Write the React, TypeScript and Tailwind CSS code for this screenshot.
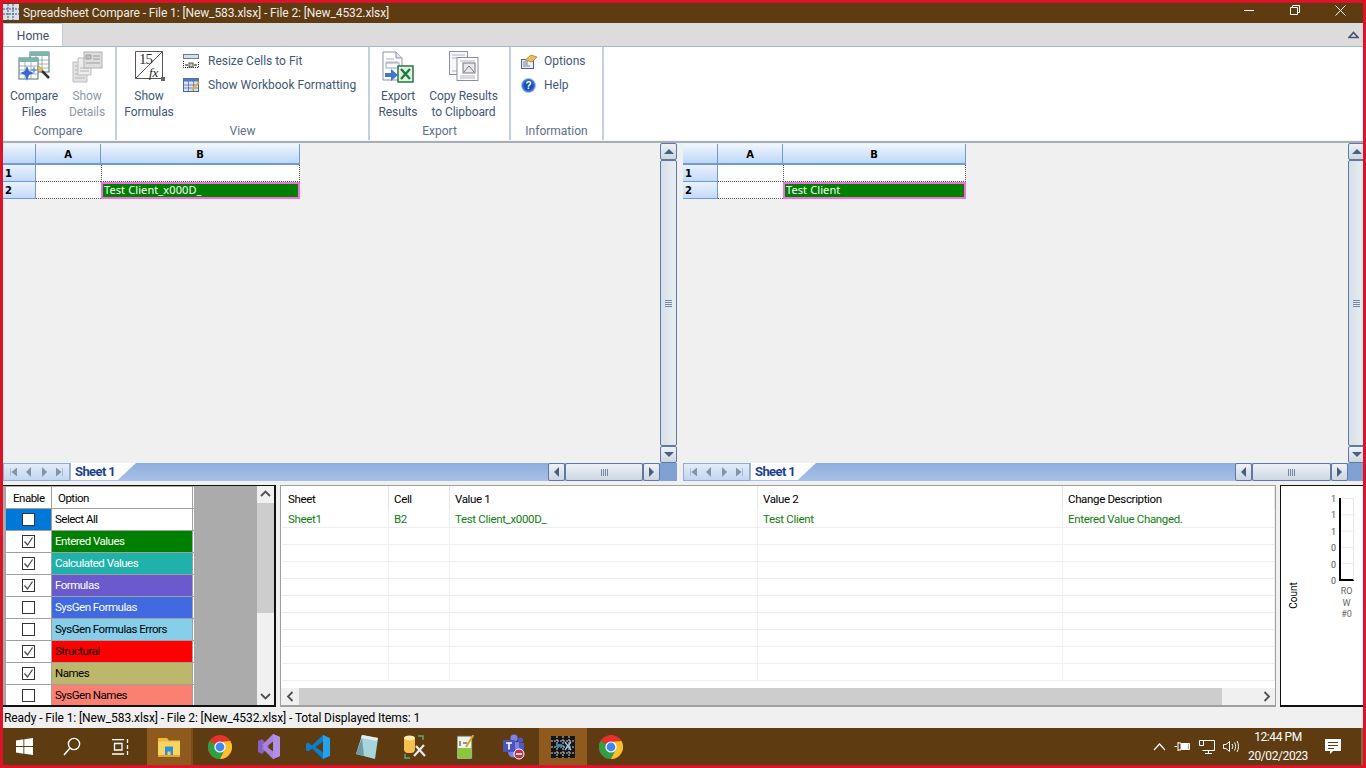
import React from "react";

const font = "font-['Roboto','Liberation_Sans',sans-serif]";

function Chrome() {
  return (
    <svg width="24" height="24" viewBox="0 0 24 24">
      <circle cx="12" cy="12" r="12" fill="#e5322d" />
      <path d="M12 12 L1.6 18 A12 12 0 0 1 1.6 6 L6 6 Z" fill="#e5322d" />
      <path d="M12 12 L1.6 6 A12 12 0 0 0 12 24 L18 13 Z" fill="#2f9e44" />
      <path d="M12 7 L22.4 6 A12 12 0 0 1 12 24 L17 14 Z" fill="#fbc02d" />
      <circle cx="12" cy="12" r="5.6" fill="#fff" />
      <circle cx="12" cy="12" r="4.4" fill="#3f86ee" />
    </svg>
  );
}

function TaskIcon({ kind }: { kind: string }) {
  if (kind === "win")
    return (
      <svg width="17" height="17" viewBox="0 0 17 17" fill="#fff">
        <path d="M0 2.4 7.4 1.3V8H0ZM8.3 1.2 17 0V8H8.3ZM0 9H7.4V15.7L0 14.6ZM8.3 9H17V17L8.3 15.8Z" />
      </svg>
    );
  if (kind === "search")
    return (
      <svg width="18" height="20" viewBox="0 0 18 20" fill="none" stroke="#fff" strokeWidth="1.4">
        <circle cx="11" cy="7" r="5.6" />
        <path d="M7 11 1 18" />
      </svg>
    );
  if (kind === "tasks")
    return (
      <svg width="17" height="16" viewBox="0 0 17 16" fill="none" stroke="#fff" strokeWidth="1.3">
        <path d="M0 .7H12M2.5 4.5H10V11H2.5ZM0 15H12M15.5 0V4M15.5 6V10M15.5 12V16" />
      </svg>
    );
  if (kind === "explorer")
    return (
      <svg width="22" height="20" viewBox="0 0 22 20">
        <path d="M0 1H9L11 3.5H22V20H0Z" fill="#f0b93a" />
        <rect x="0" y="4.5" width="22" height="15.5" fill="#f6d365" />
        <path d="M7 9.5H15V20H12.5V14.5H9.5V20H7Z" fill="#2e8fd8" />
        <rect x="0" y="18" width="22" height="2" fill="#e3a82b" />
      </svg>
    );
  if (kind === "chrome") return <Chrome />;
  if (kind === "vs")
    return (
      <svg width="22" height="25" viewBox="0 0 22 25">
        <path d="M0 7 4 5 11 12.5 4 20 0 18Z" fill="#8661c5" />
        <path d="M15 0 22 3V22L15 25 4 14 7 11 15 17.5V7.5L7 14 4 11Z" fill="#a783de" />
        <path d="M15 0 22 3V22L15 25Z" fill="#b18fe6" />
      </svg>
    );
  if (kind === "vscode")
    return (
      <svg width="24" height="24" viewBox="0 0 24 24">
        <path d="M17 0 24 3.2V20.8L17 24 6 13.5 2 16.5 0 15V9L2 7.5 6 10.5Z" fill="#0a7fcc" />
        <path d="M17 0 24 3.2V20.8L17 24Z" fill="#26a2ec" />
        <path d="M17 6.5V17.5L9.5 12Z" fill="#5f3b11" />
      </svg>
    );
  if (kind === "note")
    return (
      <svg width="22" height="24" viewBox="0 0 22 24">
        <path d="M6 0 22 3 19 24 0 19Z" fill="#a8d4dc" />
        <path d="M6 0 22 3 21 6 5 3Z" fill="#dfeff2" />
        <path d="M6 3 0 19 8 21Z" fill="#6e9ba6" />
      </svg>
    );
  if (kind === "db")
    return (
      <svg width="24" height="24" viewBox="0 0 24 24" fill="none">
        <rect x="0" y="1" width="11" height="17" rx="4" fill="#f2c14e" />
        <ellipse cx="5.5" cy="3" rx="5.5" ry="2.5" fill="#fbe7a8" />
        <path d="M14 1H19V5M1 19V23H6" stroke="#57b26a" strokeWidth="1.4" />
        <path d="M10 21 20 10M12 11 21 21" stroke="#e8e8e8" strokeWidth="2.2" />
      </svg>
    );
  if (kind === "pad")
    return (
      <svg width="17" height="24" viewBox="0 0 17 24">
        <rect x="0" y="1" width="15" height="23" fill="#eef3e8" stroke="#55663a" />
        <rect x="1" y="13" width="13" height="10" fill="#8cc63f" />
        <path d="M3 6V11M6 8H10" stroke="#333" strokeWidth="1" />
        <path d="M16.5 0 9 12" stroke="#e0a030" strokeWidth="2" />
      </svg>
    );
  if (kind === "teams")
    return (
      <svg width="22" height="26" viewBox="0 0 22 26">
        <circle cx="11" cy="4" r="3.6" fill="#7b83eb" />
        <circle cx="17.5" cy="6" r="2.6" fill="#5059c9" />
        <path d="M14 9H21V16A4 4 0 0 1 14 18Z" fill="#5059c9" />
        <path d="M5 8H16V18A5 5 0 0 1 5 18Z" fill="#7b83eb" />
        <rect x="0" y="6" width="12" height="12" rx="1" fill="#4b53bc" />
        <path d="M3 9H9M6 9V15.5" stroke="#fff" strokeWidth="1.6" />
        <circle cx="16" cy="20" r="5" fill="#c4314b" stroke="#fff" strokeWidth="1" />
        <rect x="13" y="19.2" width="6" height="1.6" fill="#fff" />
      </svg>
    );
  if (kind === "compare")
    return (
      <svg width="24" height="22" viewBox="0 0 24 22">
        <rect width="24" height="22" fill="#151515" />
        <path d="M0 5H24M0 11H24M0 17H24M6 0V22M12 0V22M18 0V22" stroke="#cfcfcf" strokeWidth="1" strokeDasharray="2 1" />
        <rect x="5" y="8" width="6" height="3" fill="#3f7fc4" />
        <path d="M14 6 20 14M20 6 14 14" stroke="#9ac4e8" strokeWidth="1.4" />
      </svg>
    );
  return null;
}

function Ribbon32({ kind }: { kind: string }) {
  if (kind === "compare")
    return (
      <svg width="32" height="32" viewBox="0 0 32 32">
        <rect x="12" y="1" width="19" height="20" fill="#fff" stroke="#4d7272" />
        <rect x="12" y="1" width="19" height="4" fill="#7fb3ae" />
        <path d="M12 9H31M12 13H31M12 17H31M18 5V21M24 5V21" stroke="#7b9a9a" strokeWidth=".7" />
        <rect x="1" y="7" width="19" height="21" fill="#fff" stroke="#4d7272" />
        <rect x="1" y="7" width="19" height="4" fill="#7fb3ae" />
        <path d="M1 15H20M1 19H20M1 23H20M7 11V28M13 11V28" stroke="#7b9a9a" strokeWidth=".7" />
        <path d="M9 15 11 20 16 22 11 24 9 30 7 24 2 22 7 20Z" fill="#3868d8" />
        <path d="M16 15 17 18 20 19 17 20 16 23 15 20 12 19 15 18Z" fill="#6d95ee" />
        <path d="M20 16 31 27" stroke="#333" strokeWidth="2.5" />
        <path d="M20 16 24 20" stroke="#f0c040" strokeWidth="2.5" />
      </svg>
    );
  if (kind === "details")
    return (
      <svg width="32" height="32" viewBox="0 0 32 32">
        <path d="M2 11H16V31H2Z" fill="#e2e2e2" stroke="#bdbdbd" />
        <path d="M4 15H14M4 19H14M4 23H14M4 27H14" stroke="#b4b4b4" />
        <path d="M7 7H20V24H7Z" fill="#ededed" stroke="#bdbdbd" />
        <path d="M9 17H18M9 20H18" stroke="#b4b4b4" />
        <rect x="13" y="1" width="18" height="16" fill="#dedede" stroke="#b0b0b0" />
        <path d="M15 4H20V8H15ZM22 5H29M22 8H29M15 12H29" stroke="#9c9c9c" fill="#c4c4c4" />
      </svg>
    );
  if (kind === "formula")
    return (
      <svg width="32" height="32" viewBox="0 0 32 32" fontFamily="Liberation Serif, serif" className="ml-[3px]">
        <path d="M27.5 .5H.5V27.5H27.5V.5L.5 27.5" fill="#fff" stroke="#555" />
        <text x="4" y="13" fontSize="15" fill="#333" letterSpacing="-1">15</text>
        <text x="14" y="26" fontSize="13" fontStyle="italic" fill="#222">fx</text>
        <rect x="26" y="26" width="4" height="4" fill="#666" />
      </svg>
    );
  if (kind === "export")
    return (
      <svg width="32" height="32" viewBox="0 0 32 32">
        <path d="M1 1H14L20 7V29H1Z" fill="#fff" stroke="#8a94a8" />
        <path d="M14 1V7H20" fill="#dde3ee" stroke="#8a94a8" />
        <path d="M4 8H12M4 11H16M4 14H16" stroke="#aab2c2" />
        <rect x="4" y="12" width="13" height="5" fill="#fff" stroke="#9aa4b6" />
        <path d="M3 22H9V18L16 24 9 30V26H3Z" fill="#3f77d2" />
        <rect x="16" y="15" width="15" height="16" fill="#e8f2e0" stroke="#17703a" strokeWidth="1.4" />
        <path d="M19 18 28 28M28 18 19 28" stroke="#17803e" strokeWidth="2.4" />
      </svg>
    );
  return (
    <svg width="30" height="30" viewBox="0 0 30 30">
      <rect x=".5" y=".5" width="18" height="23" fill="#f7f7fb" stroke="#8d8fa8" />
      <path d="M3 4H16M3 7H16M3 20H16" stroke="#b0b2c4" />
      <rect x="8" y="6.5" width="21" height="23" fill="#fff" stroke="#8d8fa8" />
      <path d="M11 10H26M11 25H26M11 27H26" stroke="#b0b2c4" />
      <rect x="14" y="12" width="12" height="10" fill="#e8e8ec" stroke="#777" />
      <path d="M15 21 20 15 25 21" stroke="#777" fill="none" />
    </svg>
  );
}

function Small({ kind }: { kind: string }) {
  if (kind === "resize")
    return (
      <svg width="16" height="14" viewBox="0 0 16 14">
        <rect x=".5" y=".5" width="15" height="4" fill="#cfe0ee" stroke="#6a7d90" />
        <path d="M.5 7V13.5H15.5V7" stroke="#222" strokeDasharray="1 1" fill="none" />
        <rect x="6" y="9" width="4" height="4" fill="#ccc" stroke="#555" />
        <path d="M2 11H5M11 11H14" stroke="#111" />
      </svg>
    );
  if (kind === "format")
    return (
      <svg width="17" height="16" viewBox="0 0 17 16">
        <rect x=".5" y="1.5" width="15" height="13" fill="#dbe4f7" stroke="#4a66a0" />
        <rect x=".5" y="1.5" width="15" height="3" fill="#5277c4" />
        <path d="M.5 8H15.5M.5 11H15.5M5.5 4V14.5M10.5 4V14.5" stroke="#4a66a0" strokeWidth=".7" />
        <path d="M9 13 16 5" stroke="#e2b23a" strokeWidth="2" />
      </svg>
    );
  if (kind === "options")
    return (
      <svg width="17" height="15" viewBox="0 0 17 15">
        <rect x=".5" y="5.5" width="12" height="9" fill="#eef2f8" stroke="#51617c" />
        <path d="M2 8H7M2 10H7M2 12H9" stroke="#6a7d9a" />
        <path d="M4 6 10 1 16 3 11 8Z" fill="#e8bf55" stroke="#9b7a25" strokeWidth=".7" />
      </svg>
    );
  return (
    <svg width="15" height="15" viewBox="0 0 15 15">
      <circle cx="7.5" cy="7.5" r="7" fill="#2f6fd6" stroke="#a9c6f0" />
      <circle cx="7.5" cy="7.5" r="4.8" fill="#1b4fae" />
      <text x="7.5" y="11" fontSize="10" fontWeight="700" textAnchor="middle" fill="#fff" fontFamily="Liberation Sans, sans-serif">?</text>
    </svg>
  );
}

function Arrow({ dir, color = "#4a5f7d" }: { dir: "u" | "d" | "l" | "r"; color?: string }) {
  const points = { u: "0,6 5,1 10,6", d: "0,1 5,6 10,1", l: "6,0 1,5 6,10", r: "1,0 6,5 1,10" }[dir];
  const vertical = dir === "u" || dir === "d";
  return (
    <svg width={vertical ? 10 : 7} height={vertical ? 7 : 10}>
      <polygon points={points} fill={color} />
    </svg>
  );
}

function Chevron({ dir }: { dir: "u" | "d" | "l" | "r" }) {
  const d = { u: "1,7 5.5,2.5 10,7", d: "1,3 5.5,7.5 10,3", l: "7.5,1 3,5.5 7.5,10", r: "3.5,1 8,5.5 3.5,10" }[dir];
  return (
    <svg width="11" height="11" fill="none" stroke="#505050" strokeWidth="1.8">
      <polyline points={d} />
    </svg>
  );
}

function BigButton({ kind, lines, width, disabled }: { kind: string; lines: string[]; width: string; disabled?: boolean }) {
  return (
    <div className={`flex flex-col items-center ${width}`}>
      <div className="flex h-[41px] items-start justify-center pt-[4px]">
        <Ribbon32 kind={kind} />
      </div>
      <div className={`text-center text-[12px] leading-[16px] tracking-[-0.09px] whitespace-nowrap ${disabled ? "text-[#8f99a6]" : "text-[#3f5876]"}`}>
        {lines.map((l) => (
          <div key={l}>{l}</div>
        ))}
      </div>
    </div>
  );
}

function SmallButton({ kind, label }: { kind: string; label: string }) {
  return (
    <div className="flex h-[24px] items-center">
      <div className="flex w-[25px] items-center">
        <Small kind={kind} />
      </div>
      <span className="text-[12px] whitespace-nowrap text-[#3f5876]">{label}</span>
    </div>
  );
}

function RibbonGroup({ width, label, children, labelPad = "" }: { width: string; label: string; children: React.ReactNode; labelPad?: string }) {
  return (
    <div className={`flex h-full flex-col border-r-2 border-r-[#c3d0e0] ${width}`}>
      <div className="flex h-[75px]">{children}</div>
      <div className={`flex h-[17px] items-center justify-center text-[12px] text-[#5c708a] ${labelPad}`}>{label}</div>
    </div>
  );
}

function SheetGrid({ head, colA, colB, value }: { head: string; colA: string; colB: string; value: string }) {
  const headCell = "flex items-center justify-center border-r border-b-2 border-[#6f9bd4] bg-gradient-to-b from-[#f0f6fe] to-[#bfd7f8] pt-[1px] font-['DejaVu_Sans',sans-serif] text-[10px] font-bold text-black";
  const rowHead = "flex items-center border-r border-b border-[#6f9bd4] bg-gradient-to-b from-[#eaf2fe] to-[#c4dafa] pl-[2px] font-['DejaVu_Sans',sans-serif] text-[10px] font-bold text-black";
  return (
    <div className="min-w-0">
      <div className="flex h-[21px]">
        <div className={`${head} ${headCell}`} />
        <div className={`${colA} ${headCell}`}>A</div>
        <div className={`${colB} ${headCell}`}>B</div>
      </div>
      <div className="flex h-[17px]">
        <div className={`${head} ${rowHead}`}>1</div>
        <div className={`${colA} border-b border-dotted border-b-[#555] bg-white`} />
        <div className={`${colB} border-r border-b border-l border-dotted border-[#555] bg-white`} />
      </div>
      <div className="flex h-[17px]">
        <div className={`${head} ${rowHead}`}>2</div>
        <div className={`${colA} border-b border-dotted border-b-[#555] bg-white`} />
        <div className={`${colB} flex items-center border-2 border-[#f56ee0] bg-[#008000] pb-[2px] pl-[1px] font-['Noto_Sans',sans-serif] text-[11px] leading-none tracking-[0.1px] whitespace-nowrap text-white`}>{value}</div>
      </div>
    </div>
  );
}

function Grip({ vertical }: { vertical?: boolean }) {
  return vertical ? (
    <div className="flex flex-col gap-[1px]">
      {[0, 1, 2, 3].map((i) => (
        <div key={i} className="h-[1px] w-[7px] bg-[#77879e]" />
      ))}
    </div>
  ) : (
    <div className="flex gap-[1px]">
      {[0, 1, 2, 3].map((i) => (
        <div key={i} className="h-[7px] w-[1px] bg-[#77879e]" />
      ))}
    </div>
  );
}

function SheetPane({ width, head, colA, colB, value, scrollW }: { width: string; head: string; colA: string; colB: string; value: string; scrollW: string }) {
  const btn = "flex items-center justify-center rounded-[2px] border border-[#61799f] bg-gradient-to-b from-[#eef2f7] to-[#ccd6e2]";
  return (
    <div className={`flex h-[338px] shrink-0 flex-col bg-[#f0f0f0] ${width}`}>
      <div className="flex min-h-0 flex-1">
        <div className="min-w-0 flex-1 pt-[1px]">
          <SheetGrid head={head} colA={colA} colB={colB} value={value} />
        </div>
        <div className="flex w-[17px] flex-col bg-[#e6ebf1]">
          <div className={`h-[17px] ${btn}`}>
            <Arrow dir="u" />
          </div>
          <div className="flex flex-1 items-center justify-center rounded-[2px] border border-[#61799f] bg-gradient-to-r from-[#d7dfe8] to-[#e8edf2]">
            <Grip vertical />
          </div>
          <div className={`h-[17px] ${btn}`}>
            <Arrow dir="d" />
          </div>
        </div>
      </div>
      <div className="flex h-[18px] bg-gradient-to-b from-[#8eaddd] to-[#a7c0e6]">
        <div className="flex w-[67px] items-center justify-around border border-[#93add2] bg-gradient-to-b from-[#e3edfb] to-[#c3d6f1] px-[2px]">
          <svg width="7" height="8"><path d="M0 0V8M7 0 2 4 7 8Z" stroke="#8593a8" fill="#8593a8" /></svg>
          <Arrow dir="l" color="#8593a8" />
          <Arrow dir="r" color="#8593a8" />
          <svg width="7" height="8"><path d="M7 0V8M0 0 5 4 0 8Z" stroke="#8593a8" fill="#8593a8" /></svg>
        </div>
        <div className="ml-[1px] flex h-[17px] w-[65px] items-center bg-white pl-[4px] text-[13px] font-bold tracking-[-0.6px] text-[#1d3f8f] [clip-path:polygon(0_0,100%_0,72%_100%,0_100%)]">
          Sheet 1
        </div>
        <div className="flex-1" />
        <div className={`flex ${scrollW}`}>
          <div className={`w-[17px] ${btn}`}>
            <Arrow dir="l" />
          </div>
          <div className={`flex flex-1 items-center justify-center ${btn}`}>
            <Grip />
          </div>
          <div className={`w-[17px] ${btn}`}>
            <Arrow dir="r" />
          </div>
        </div>
        <div className="w-[17px] bg-[#7fa2d3]" />
      </div>
    </div>
  );
}

function Check({ checked }: { checked: boolean }) {
  return (
    <div className="flex h-[13px] w-[13px] items-center justify-center border border-[#333] bg-white">
      {checked && (
        <svg width="11" height="11" fill="none" stroke="#444" strokeWidth="1.2">
          <polyline points="1.5,5.5 4.5,9 9.5,1.5" />
        </svg>
      )}
    </div>
  );
}

const options: { label: string; bg: string; text: string; checked: boolean }[] = [
  { label: "Select All", bg: "bg-white", text: "text-black", checked: false },
  { label: "Entered Values", bg: "bg-[#008000]", text: "text-white", checked: true },
  { label: "Calculated Values", bg: "bg-[#20b2aa]", text: "text-white", checked: true },
  { label: "Formulas", bg: "bg-[#6a5acd]", text: "text-white", checked: true },
  { label: "SysGen Formulas", bg: "bg-[#4169e1]", text: "text-white", checked: false },
  { label: "SysGen Formulas Errors", bg: "bg-[#87ceeb]", text: "text-black", checked: false },
  { label: "Structural", bg: "bg-[#ff0000]", text: "text-black", checked: true },
  { label: "Names", bg: "bg-[#bdb76b]", text: "text-black", checked: true },
  { label: "SysGen Names", bg: "bg-[#fa8072]", text: "text-black", checked: false },
];

function OptionsPanel() {
  return (
    <div className="flex h-[222px] w-[273px] overflow-hidden border-[#111] bg-[#ababab] [border-width:1px_2px_2px_0]">
      <div className="w-[191px] shrink-0 overflow-hidden bg-[#ababab] pt-[1px] pl-[2px]">
        <div className="flex h-[22px] border-b border-l border-b-[#a0a0a0] border-l-[#a0a0a0] bg-white text-[11.5px] leading-[23px] tracking-[-0.5px] text-black">
          <div className="w-[46px] border-r border-r-[#a0a0a0] pl-[7px]">Enable</div>
          <div className="w-[141px] border-r border-r-[#a0a0a0] pl-[6px]">Option</div>
        </div>
        {options.map((o, i) => (
          <div key={o.label} className="flex h-[22px] border-b border-l border-b-[#a0a0a0] border-l-[#a0a0a0] bg-white text-[11.5px] tracking-[-0.5px]">
            <div className={`flex w-[46px] items-center justify-center border-r border-r-[#a0a0a0] ${i === 0 ? "bg-[#0078d7]" : ""}`}>
              <Check checked={o.checked} />
            </div>
            <div className={`flex w-[141px] items-center border-r border-r-[#a0a0a0] pt-[1px] pl-[3px] whitespace-nowrap ${o.bg} ${o.text}`}>{o.label}</div>
          </div>
        ))}
      </div>
      <div className="flex-1" />
      <div className="flex w-[17px] flex-col items-center bg-[#f0f0f0]">
        <div className="flex h-[17px] items-center justify-center">
          <Chevron dir="u" />
        </div>
        <div className="h-[110px] w-full bg-[#cdcdcd]" />
        <div className="flex-1" />
        <div className="flex h-[17px] items-center justify-center">
          <Chevron dir="d" />
        </div>
      </div>
    </div>
  );
}

const cols = ["w-[107px]", "w-[61px]", "w-[308px]", "w-[305px]", "flex-1"];
const headers = ["Sheet", "Cell", "Value 1", "Value 2", "Change Description"];
const row1 = ["Sheet1", "B2", "Test Client_x000D_", "Test Client", "Entered Value Changed."];

function ResultsPanel() {
  return (
    <div className="flex h-[222px] w-[996px] flex-col border-[#a0a0a0] bg-white [border-width:1px_1px_2px_1px]">
      <div className="flex h-[25px] pl-[1px] text-[11.5px] tracking-[-0.35px] text-black">
        {headers.map((h, i) => (
          <div key={h} className={`${cols[i]} flex h-[24px] items-center border-r border-r-[#e5e5e5] pt-[3px] whitespace-nowrap ${i === 0 ? "pl-[6px]" : "pl-[5px]"}`}>
            {h}
          </div>
        ))}
      </div>
      <div className="flex-1 overflow-hidden pl-[1px]">
        {Array.from({ length: 10 }).map((_, r) => (
          <div key={r} className="flex h-[17px] border-b border-b-[#eeeeee] text-[11.5px] tracking-[-0.33px] text-[#108010]">
            {cols.map((c, i) => (
              <div key={i} className={`${c} flex items-center border-r border-r-[#f0f0f0] pt-[2px] whitespace-nowrap ${i === 0 ? "pl-[6px]" : "pl-[5px]"}`}>
                {r === 0 ? row1[i] : ""}
              </div>
            ))}
          </div>
        ))}
      </div>
      <div className="flex h-[17px] items-center bg-[#f0f0f0] pl-[1px]">
        <div className="flex w-[17px] justify-center">
          <Chevron dir="l" />
        </div>
        <div className="h-full w-[923px] bg-[#cdcdcd]" />
        <div className="flex-1" />
        <div className="flex w-[17px] justify-center">
          <Chevron dir="r" />
        </div>
      </div>
    </div>
  );
}

function ChartPanel() {
  return (
    <div className="flex h-[222px] flex-1 border-[#111] bg-white [border-width:1px_0_2px_1px]">
      <div className="flex w-[24px] items-center justify-center">
        <span className="-rotate-90 text-[10px] whitespace-nowrap text-black">Count</span>
      </div>
      <div className="w-[34px] pt-[5px] pr-[3px] text-right text-[9px] leading-[16.4px] text-[#555]">
        {["1", "1", "1", "0", "0", "0"].map((v, i) => (
          <div key={i}>{v}</div>
        ))}
      </div>
      <div className="w-[19px] pt-[12px]">
        <div className="h-[83px] w-[15px] border-r border-b-2 border-l-2 border-r-[#e8e8e8] border-b-black border-l-black bg-[linear-gradient(#e8e8e8_1px,transparent_1px)] bg-[length:100%_16.3px]" />
        <div className="w-[15px] pt-[5px] text-center text-[9px] leading-[11.5px] text-[#666]">
          <div>RO</div>
          <div>W</div>
          <div>#0</div>
        </div>
      </div>
    </div>
  );
}

const taskItems: { kind: string; cls: string }[] = [
  { kind: "win", cls: "w-[42px]" },
  { kind: "search", cls: "w-[54px]" },
  { kind: "tasks", cls: "w-[48px] pr-[6px]" },
  { kind: "explorer", cls: "w-[46px] bg-[#8f5a1d] border-r-2 border-r-[#7a4c17]" },
  { kind: "chrome", cls: "ml-[2.5px] w-[49px]" },
  { kind: "vs", cls: "w-[49px]" },
  { kind: "vscode", cls: "w-[49px]" },
  { kind: "note", cls: "w-[49px]" },
  { kind: "db", cls: "w-[49px]" },
  { kind: "pad", cls: "w-[49px]" },
  { kind: "teams", cls: "w-[49px]" },
  { kind: "compare", cls: "w-[48px] bg-[#8f5a1d]" },
  { kind: "chrome", cls: "w-[49px]" },
];

export default function App() {
  return (
    <div className={`flex h-[768px] w-[1366px] flex-col overflow-hidden border-[3px] border-[#dc1428] bg-[#f0f0f0] ${font}`}>
      {/* Title bar */}
      <div className="flex h-[20px] shrink-0 items-center bg-[#5f3b11] text-white">
        <svg width="16" height="16" viewBox="0 0 16 16" className="-mt-[2px] mr-[4px]">
          <rect width="16" height="16" fill="#d9dfe8" />
          <path d="M0 5H16M0 10H16M5 0V16M10 0V16" stroke="#39547a" strokeWidth="1" strokeDasharray="2 1" />
        </svg>
        <span className="text-[12px] tracking-[-0.1px] whitespace-nowrap text-[#f1ece4]">Spreadsheet Compare - File 1: [New_583.xlsx] - File 2: [New_4532.xlsx]</span>
        <div className="flex-1" />
        <div className="flex items-center pb-[6px]">
          <div className="flex w-[46px] justify-center pl-[2px]">
            <div className="h-[1px] w-[10px] bg-white" />
          </div>
          <div className="flex w-[46px] justify-center pl-[2px]">
            <svg width="10" height="10" fill="none" stroke="#fff">
              <path d="M2.5 2.5V.5H9.5V7.5H7.5M.5 2.5H7.5V9.5H.5Z" />
            </svg>
          </div>
          <div className="flex w-[46px] justify-center">
            <svg width="11" height="11" fill="none" stroke="#fff">
              <path d="M.5 .5 10.5 10.5M10.5 .5 .5 10.5" />
            </svg>
          </div>
        </div>
      </div>
      {/* Tab strip */}
      <div className="flex h-[24px] shrink-0 items-end border-b border-b-[#a3b5cf] bg-[#dcdcdc]">
        <div className="flex h-[23px] w-[60px] items-center justify-center rounded-t-[2px] border border-b-0 border-[#b9cbe0] bg-white pt-[2px] text-[12px] text-[#3f4f66]">Home</div>
        <div className="flex-1" />
        <svg width="11" height="9" viewBox="0 0 11 9" fill="none" stroke="#4a5568" strokeWidth="1.7" className="mr-[4px] mb-[7px]">
          <path d="M1 7.5 5.5 2.5 10 7.5Z" />
        </svg>
      </div>
      {/* Ribbon */}
      <div className="flex h-[93px] shrink-0 bg-white">
        <RibbonGroup width="w-[114px]" label="Compare" labelPad="pr-[2px]">
          <div className="flex pl-[2px]">
            <BigButton kind="compare" lines={["Compare", "Files"]} width="w-[58px]" />
            <BigButton kind="details" lines={["Show", "Details"]} width="w-[48px]" disabled />
          </div>
        </RibbonGroup>
        <RibbonGroup width="w-[253px]" label="View">
          <div className="flex pl-[5px]">
            <BigButton kind="formula" lines={["Show", "Formulas"]} width="w-[54px]" />
            <div className="pt-[2px] pl-[7px]">
              <SmallButton kind="resize" label="Resize Cells to Fit" />
              <SmallButton kind="format" label="Show Workbook Formatting" />
            </div>
          </div>
        </RibbonGroup>
        <RibbonGroup width="w-[141px]" label="Export">
          <div className="flex pl-[7px]">
            <BigButton kind="export" lines={["Export", "Results"]} width="w-[42px]" />
            <div className="w-[5px]" />
            <BigButton kind="copy" lines={["Copy Results", "to Clipboard"]} width="w-[79px]" />
          </div>
        </RibbonGroup>
        <RibbonGroup width="w-[93px]" label="Information">
          <div className="pt-[2px] pl-[10px]">
            <div className="[&>div>div:first-child]:w-[23px]">
              <SmallButton kind="options" label="Options" />
              <SmallButton kind="help" label="Help" />
            </div>
          </div>
        </RibbonGroup>
      </div>
      <div className="h-[3px] shrink-0 [background:linear-gradient(#f4f4f4_0_1px,#a8aeb6_1px_100%)]" />
      {/* Sheets */}
      <div className="flex h-[338px] shrink-0 gap-[6px]">
        <SheetPane width="w-[674px]" head="w-[33px]" colA="w-[65px]" colB="w-[199px]" value="Test Client_x000D_" scrollW="w-[112px]" />
        <SheetPane width="w-[682px]" head="w-[35px]" colA="w-[65px]" colB="w-[183px]" value="Test Client" scrollW="w-[113px]" />
      </div>
      <div className="h-[4px] shrink-0 bg-[#f0f0f0]" />
      {/* Bottom */}
      <div className="flex h-[222px] shrink-0 gap-[4px]">
        <OptionsPanel />
        <ResultsPanel />
        <ChartPanel />
      </div>
      {/* Status */}
      <div className="flex h-[21px] shrink-0 items-center pl-[1px] text-[12px] tracking-[-0.09px] whitespace-nowrap text-black">
        Ready - File 1: [New_583.xlsx] - File 2: [New_4532.xlsx] - Total Displayed Items: 1
      </div>
      {/* Taskbar */}
      <div className="flex h-[37px] shrink-0 items-center bg-[#5f3b11] text-white">
        {taskItems.map((t, i) => (
          <div key={i} className={`flex h-full items-center justify-center ${t.cls}`}>
            <TaskIcon kind={t.kind} />
          </div>
        ))}
        <div className="flex-1" />
        <div className="flex items-center gap-[8.5px] pr-[3px]">
          <svg width="13" height="8" fill="none" stroke="#fff" strokeWidth="1.2"><path d="M1 7 6.5 1 12 7" /></svg>
          <svg width="16" height="11" fill="none" stroke="#fff"><path d="M.5 5.5H3M4 1V10M4 2H7V9H4M7.5 2.5H15.5V8.5H7.5Z" /><rect x="8" y="3" width="6" height="5" fill="#fff" /></svg>
          <svg width="16" height="14" fill="none" stroke="#fff"><path d="M3.5 .5H15.5V10.5H3.5M.5 .5H4.500V5.5H.5ZM9.5 10.5V13.5M6 13.5H13" /></svg>
          <svg width="16" height="13" fill="none" stroke="#fff"><path d="M.5 4.5H3L6.5 1.5V11.5L3 8.5H.5ZM9 4C10 5.5 10 7.5 9 9M11.5 2.5C13 5 13 8 11.5 10.5M14 1C16 4.5 16 8.5 14 12" /></svg>
        </div>
        <div className="w-[72px] pt-[1px] text-center text-[12px] leading-[19px] tracking-[-0.4px]">
          <div>12:44 PM</div>
          <div className="whitespace-nowrap">20/02/2023</div>
        </div>
        <div className="flex w-[38px] justify-center">
          <svg width="17" height="16" viewBox="0 0 17 16">
            <path d="M0 0H16V12H8L5 15V12H0Z" fill="#fff" />
            <path d="M3 3.5H13M3 6.5H13M3 9.5H9" stroke="#5f3b11" />
          </svg>
        </div>
        <div className="w-[9px]" />
        <div className="h-full w-[2px] bg-[#8a6a3c]" />
      </div>
    </div>
  );
}
